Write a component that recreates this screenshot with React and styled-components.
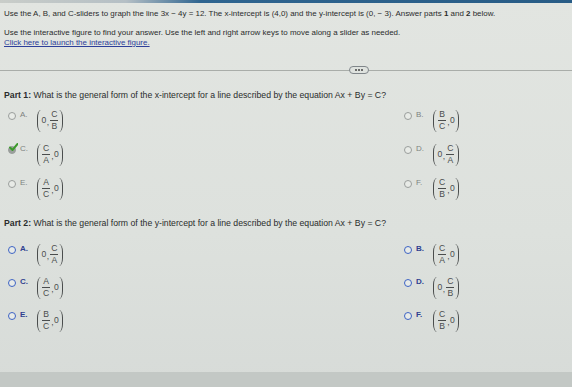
import React from "react";
import styled, { createGlobalStyle } from "styled-components";

const Global = createGlobalStyle`
  html, body { margin: 0; padding: 0; }
  body {
    width: 572px; height: 387px; overflow: hidden;
    background: #dfe3df;
    font-family: "Liberation Sans", Arial, sans-serif;
    color: #2a2c2c;
  }
`;

const Page = styled.div`
  width: 572px; height: 387px;
  display: flex; flex-direction: column;
  background: linear-gradient(180deg, #e2e5e1 0%, #dde1dd 60%, #d7dbd8 100%);
`;

const TopBar = styled.div`
  height: 3px;
  background: linear-gradient(90deg, #c9cdc9 0%, #b5bfc5 22%, #2f6590 35%, #285c86 100%);
`;

const Content = styled.div`
  flex: 1;
  padding: 6px 4px 0 4px;
  display: flex; flex-direction: column;
`;

const Para = styled.p`
  margin: 0;
  font-size: ${p => p.$fs || 7.95}px;
  line-height: 10px;
  white-space: nowrap;
`;

const Intro = styled(Para)`
  margin-bottom: 9px;
`;

const Link = styled.a`
  display: block;
  font-size: 7.95px;
  line-height: 10px;
  color: #2d3f9a;
  text-decoration: underline;
`;

const DividerRow = styled.div`
  margin: 18px -4px 0 -4px;
  height: 8px;
  display: flex; align-items: center;
  position: relative;
`;

const Line = styled.div`
  flex: 1; height: 1px; background: #a9ada9;
`;

const Pill = styled.div`
  position: absolute; left: 349px; top: 0;
  width: 18px; height: 6px;
  border: 1px solid #80868a; border-radius: 4px;
  background: #dfe3df;
  display: flex; align-items: center; justify-content: center; gap: 1.5px;
`;

const Dot = styled.span`
  width: 1.5px; height: 1.5px; background: #555; border-radius: 50%;
`;

const PartTitle = styled(Para)`
  margin-top: ${p => p.$mt}px;
  b { font-weight: bold; }
`;

const Grid = styled.div`
  display: grid;
  grid-template-columns: 396px 1fr;
  row-gap: ${p => p.$gap}px;
  margin-top: ${p => p.$mt}px;
  padding-left: 4px;
`;

const Option = styled.div`
  display: flex; align-items: flex-start;
  height: 23px;
`;

const RadioWrap = styled.span`
  position: relative;
  width: 8px; height: 8px; margin-top: 3px; margin-right: 4px;
  flex: none;
`;

const Radio = styled.span`
  display: block;
  width: 6px; height: 6px; border-radius: 50%;
  border: 1px solid ${p => (p.$active ? "#3d63c4" : "#9a9e9c")};
  background: ${p => (p.$checked ? "#9aa09c" : "#e8ebe7")};
`;

const Check = styled.svg`
  position: absolute; left: 1px; top: -3px;
  width: 9px; height: 8px;
`;

const Letter = styled.span`
  width: 14px; flex: none;
  font-size: 8px; line-height: 10px; margin-top: 1px;
  color: ${p => (p.$active ? "#2f3f8f" : "#7d8280")};
  font-weight: ${p => (p.$active ? "bold" : "normal")};
`;

const Math = styled.span`
  display: flex; align-items: center;
  height: 23px; margin-left: 3px;
  color: #4a4d4d; font-size: 8.6px;
`;

const Paren = styled.span`
  width: 3px; height: 22px;
  border: 1px solid #4a4d4d;
  ${p => (p.$right ? "border-left: none; border-radius: 0 5px 5px 0 / 0 10px 10px 0;" : "border-right: none; border-radius: 5px 0 0 5px / 10px 0 0 10px;")}
  border-top: none; border-bottom: none;
`;

const Frac = styled.span`
  display: inline-flex; flex-direction: column; align-items: center;
  margin: 0 1px;
`;

const Num = styled.span`
  line-height: 9px; padding: 0 1px;
`;

const Bar = styled.span`
  align-self: stretch; height: 1px; background: #4a4d4d; margin: 1px 0;
`;

const Plain = styled.span`
  line-height: 9px; margin: 0 0.5px;
`;

const Comma = styled.span`
  line-height: 9px; margin-top: 4px;
`;

function Expr({ first, n, d }) {
  const frac = (
    <Frac>
      <Num>{n}</Num>
      <Bar />
      <Num>{d}</Num>
    </Frac>
  );
  return (
    <Math>
      <Paren />
      {first ? (
        <>
          <Plain>0</Plain>
          <Comma>,</Comma>
          {frac}
        </>
      ) : (
        <>
          {frac}
          <Comma>,</Comma>
          <Plain>0</Plain>
        </>
      )}
      <Paren $right />
    </Math>
  );
}

function Opt({ letter, active, checked, first, n, d }) {
  return (
    <Option>
      <RadioWrap>
        <Radio $active={active} $checked={checked} />
        {checked && (
          <Check viewBox="0 0 9 8">
            <path d="M1 4.5 L3.5 7 L8.5 1" stroke="#3c9a2c" strokeWidth="2" fill="none" strokeLinecap="round" />
          </Check>
        )}
      </RadioWrap>
      <Letter $active={active}>{letter}.</Letter>
      <Expr first={first} n={n} d={d} />
    </Option>
  );
}

const part1 = [
  { letter: "A", first: true, n: "C", d: "B" },
  { letter: "B", first: false, n: "B", d: "C" },
  { letter: "C", first: false, n: "C", d: "A", checked: true },
  { letter: "D", first: true, n: "C", d: "A" },
  { letter: "E", first: false, n: "A", d: "C" },
  { letter: "F", first: false, n: "C", d: "B" },
];

const part2 = [
  { letter: "A", first: true, n: "C", d: "A" },
  { letter: "B", first: false, n: "C", d: "A" },
  { letter: "C", first: false, n: "A", d: "C" },
  { letter: "D", first: true, n: "C", d: "B" },
  { letter: "E", first: false, n: "B", d: "C" },
  { letter: "F", first: false, n: "C", d: "B" },
];

const BottomBand = styled.div`
  height: 15px;
  background: #c3c8c5;
`;

export default function App() {
  return (
    <Page>
      <Global />
      <TopBar />
      <Content>
        <Intro>
          Use the A, B, and C-sliders to graph the line 3x − 4y = 12. The x-intercept is (4,0) and the y-intercept is (0, − 3). Answer parts <b>1</b> and <b>2</b> below.
        </Intro>
        <Para>Use the interactive figure to find your answer. Use the left and right arrow keys to move along a slider as needed.</Para>
        <Link href="#">Click here to launch the interactive figure.</Link>
        <DividerRow>
          <Line />
          <Pill><Dot /><Dot /><Dot /></Pill>
        </DividerRow>
        <PartTitle $mt={16} $fs={8.7}>
          <b>Part 1:</b> What is the general form of the x-intercept for a line described by the equation Ax + By = C?
        </PartTitle>
        <Grid $mt={9} $gap={11}>
          {part1.map(o => <Opt key={o.letter} {...o} />)}
        </Grid>
        <PartTitle $mt={18} $fs={8.7}>
          <b>Part 2:</b> What is the general form of the y-intercept for a line described by the equation Ax + By = C?
        </PartTitle>
        <Grid $mt={15} $gap={10}>
          {part2.map(o => <Opt key={o.letter} {...o} active />)}
        </Grid>
      </Content>
      <BottomBand />
    </Page>
  );
}
